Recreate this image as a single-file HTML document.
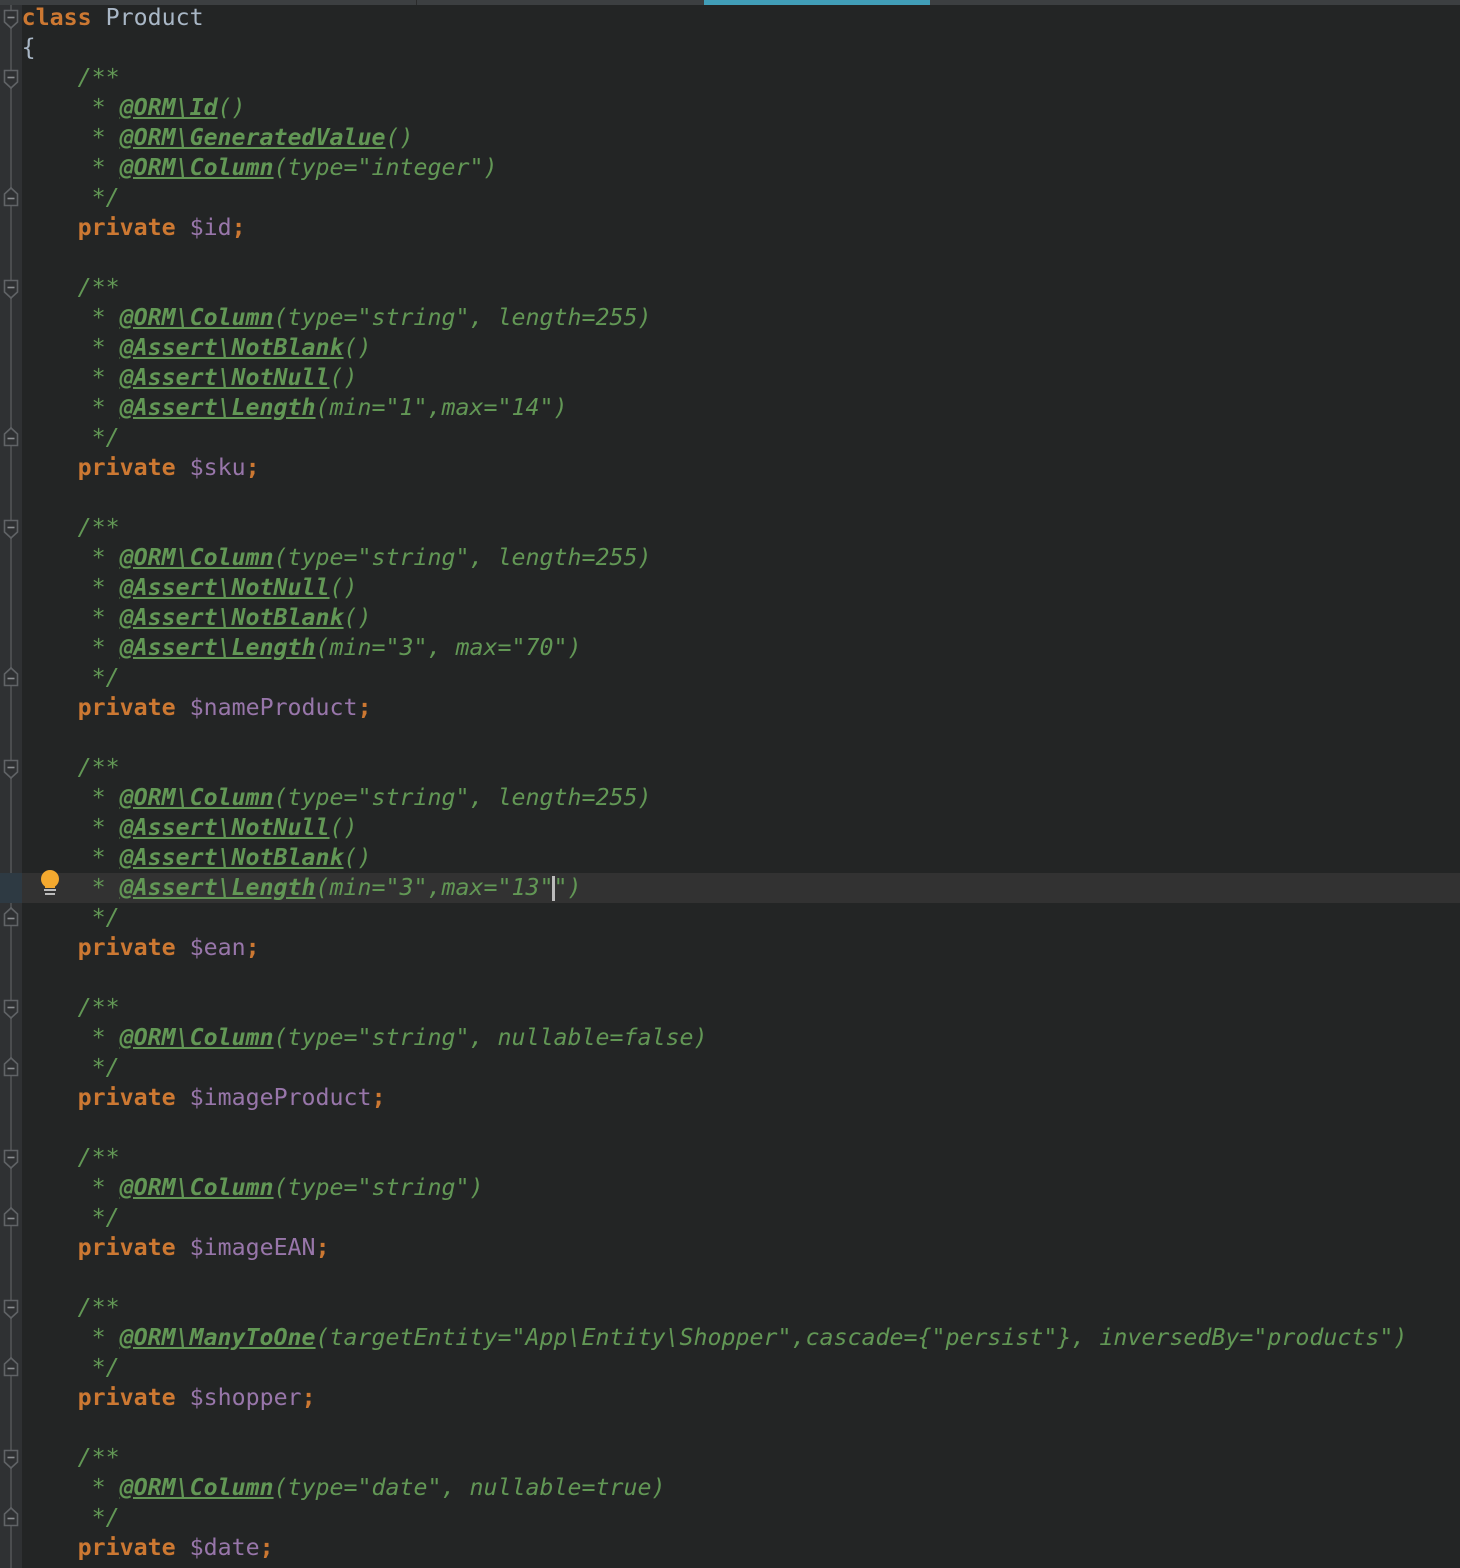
<!DOCTYPE html>
<html><head><meta charset="utf-8"><style>
html,body{margin:0;padding:0;}
body{width:1460px;height:1568px;background:#232525;position:relative;overflow:hidden;font-family:"DejaVu Sans Mono","Liberation Mono",monospace;font-size:23.25px;}
#top{position:absolute;left:0;top:0;width:1460px;height:5px;background:#3c3f41;}
#top i{position:absolute;left:704px;width:226px;top:0;height:5px;background:#419eb8;}
#top b{position:absolute;left:416px;width:1px;top:0;height:5px;background:#2b2b2b;}
#gut{position:absolute;left:0;top:5px;width:22px;height:1563px;background:#2f3133;}
#vl{position:absolute;left:10px;top:5px;width:2px;height:1563px;background:#4b4d4f;}
#cur{position:absolute;left:22px;top:873px;width:1438px;height:30px;background:#323232;}
#curg{position:absolute;left:0;top:873px;width:22px;height:30px;background:#2e3a43;}
.l{position:absolute;left:21.6px;height:30px;line-height:30px;white-space:pre;color:#a9b7c6;}
.k{color:#cc7832;font-weight:bold;}
.v{color:#9876aa;}
.c{color:#629755;font-style:italic;}
.a{color:#629755;font-style:italic;font-weight:bold;text-decoration:underline;}
</style></head><body>
<div id="top"><b></b><i></i></div>
<div id="gut"></div><div id="vl"></div>
<div id="curg"></div><div id="cur"></div>

<svg width="22" height="1568" style="position:absolute;left:0;top:0">
<g fill="#2f3133" stroke="#606366" stroke-width="1.6">
<path id="d" d="M4.5 10.5 H17.5 V22 L11 28 L4.5 22 Z"/>
<use href="#d" y="60"/><use href="#d" y="270"/><use href="#d" y="510"/><use href="#d" y="750"/>
<use href="#d" y="990"/><use href="#d" y="1140"/><use href="#d" y="1290"/><use href="#d" y="1440"/>
<path id="u" d="M4.5 205.5 H17.5 V194 L11 188 L4.5 194 Z"/>
<use href="#u" y="240"/><use href="#u" y="480"/><use href="#u" y="720"/><use href="#u" y="870"/>
<use href="#u" y="1020"/><use href="#u" y="1170"/><use href="#u" y="1320"/>
</g>
<g stroke="#8a8d90" stroke-width="1.6">
<path id="m" d="M7.5 17.5 H14.5"/>
<use href="#m" y="60"/><use href="#m" y="270"/><use href="#m" y="510"/><use href="#m" y="750"/>
<use href="#m" y="990"/><use href="#m" y="1140"/><use href="#m" y="1290"/><use href="#m" y="1440"/>
<use href="#m" y="181"/><use href="#m" y="421"/><use href="#m" y="661"/><use href="#m" y="901"/>
<use href="#m" y="1051"/><use href="#m" y="1201"/><use href="#m" y="1351"/><use href="#m" y="1501"/>
</g>
</svg>

<svg width="30" height="32" style="position:absolute;left:36px;top:868px">
<circle cx="14" cy="11" r="9" fill="#f4a92f"/>
<rect x="9" y="16" width="10" height="4" fill="#f4a92f"/>
<rect x="8" y="21" width="12" height="2" fill="#bbbbbb"/>
<rect x="9" y="25" width="10" height="2" fill="#bbbbbb"/>
</svg>

<div class="l" style="top:3px"><span class="k">class</span> Product</div>
<div class="l" style="top:33px">{</div>
<div class="l" style="top:63px">    <span class="c">/**</span></div>
<div class="l" style="top:93px"><span class="c">     * </span><span class="a">@ORM\Id</span><span class="c">()</span></div>
<div class="l" style="top:123px"><span class="c">     * </span><span class="a">@ORM\GeneratedValue</span><span class="c">()</span></div>
<div class="l" style="top:153px"><span class="c">     * </span><span class="a">@ORM\Column</span><span class="c">(type="integer")</span></div>
<div class="l" style="top:183px"><span class="c">     */</span></div>
<div class="l" style="top:213px">    <span class="k">private</span> <span class="v">$id</span><span class="k">;</span></div>

<div class="l" style="top:273px">    <span class="c">/**</span></div>
<div class="l" style="top:303px"><span class="c">     * </span><span class="a">@ORM\Column</span><span class="c">(type="string", length=255)</span></div>
<div class="l" style="top:333px"><span class="c">     * </span><span class="a">@Assert\NotBlank</span><span class="c">()</span></div>
<div class="l" style="top:363px"><span class="c">     * </span><span class="a">@Assert\NotNull</span><span class="c">()</span></div>
<div class="l" style="top:393px"><span class="c">     * </span><span class="a">@Assert\Length</span><span class="c">(min="1",max="14")</span></div>
<div class="l" style="top:423px"><span class="c">     */</span></div>
<div class="l" style="top:453px">    <span class="k">private</span> <span class="v">$sku</span><span class="k">;</span></div>

<div class="l" style="top:513px">    <span class="c">/**</span></div>
<div class="l" style="top:543px"><span class="c">     * </span><span class="a">@ORM\Column</span><span class="c">(type="string", length=255)</span></div>
<div class="l" style="top:573px"><span class="c">     * </span><span class="a">@Assert\NotNull</span><span class="c">()</span></div>
<div class="l" style="top:603px"><span class="c">     * </span><span class="a">@Assert\NotBlank</span><span class="c">()</span></div>
<div class="l" style="top:633px"><span class="c">     * </span><span class="a">@Assert\Length</span><span class="c">(min="3", max="70")</span></div>
<div class="l" style="top:663px"><span class="c">     */</span></div>
<div class="l" style="top:693px">    <span class="k">private</span> <span class="v">$nameProduct</span><span class="k">;</span></div>

<div class="l" style="top:753px">    <span class="c">/**</span></div>
<div class="l" style="top:783px"><span class="c">     * </span><span class="a">@ORM\Column</span><span class="c">(type="string", length=255)</span></div>
<div class="l" style="top:813px"><span class="c">     * </span><span class="a">@Assert\NotNull</span><span class="c">()</span></div>
<div class="l" style="top:843px"><span class="c">     * </span><span class="a">@Assert\NotBlank</span><span class="c">()</span></div>
<div class="l" style="top:873px"><span class="c">     * </span><span class="a">@Assert\Length</span><span class="c">(min="3",max="13"")</span></div>
<div style="position:absolute;left:552px;top:876px;width:3px;height:25px;background:#bbbbbb"></div>
<div class="l" style="top:903px"><span class="c">     */</span></div>
<div class="l" style="top:933px">    <span class="k">private</span> <span class="v">$ean</span><span class="k">;</span></div>

<div class="l" style="top:993px">    <span class="c">/**</span></div>
<div class="l" style="top:1023px"><span class="c">     * </span><span class="a">@ORM\Column</span><span class="c">(type="string", nullable=false)</span></div>
<div class="l" style="top:1053px"><span class="c">     */</span></div>
<div class="l" style="top:1083px">    <span class="k">private</span> <span class="v">$imageProduct</span><span class="k">;</span></div>

<div class="l" style="top:1143px">    <span class="c">/**</span></div>
<div class="l" style="top:1173px"><span class="c">     * </span><span class="a">@ORM\Column</span><span class="c">(type="string")</span></div>
<div class="l" style="top:1203px"><span class="c">     */</span></div>
<div class="l" style="top:1233px">    <span class="k">private</span> <span class="v">$imageEAN</span><span class="k">;</span></div>

<div class="l" style="top:1293px">    <span class="c">/**</span></div>
<div class="l" style="top:1323px"><span class="c">     * </span><span class="a">@ORM\ManyToOne</span><span class="c">(targetEntity="App\Entity\Shopper",cascade={"persist"}, inversedBy="products")</span></div>
<div class="l" style="top:1353px"><span class="c">     */</span></div>
<div class="l" style="top:1383px">    <span class="k">private</span> <span class="v">$shopper</span><span class="k">;</span></div>

<div class="l" style="top:1443px">    <span class="c">/**</span></div>
<div class="l" style="top:1473px"><span class="c">     * </span><span class="a">@ORM\Column</span><span class="c">(type="date", nullable=true)</span></div>
<div class="l" style="top:1503px"><span class="c">     */</span></div>
<div class="l" style="top:1533px">    <span class="k">private</span> <span class="v">$date</span><span class="k">;</span></div>
</body></html>
